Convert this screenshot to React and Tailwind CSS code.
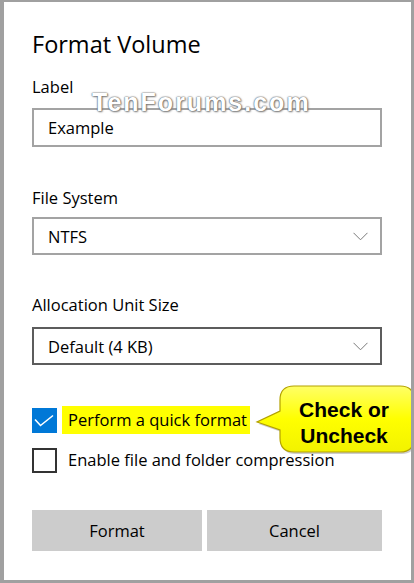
import React from "react";

const Chevron = () => (
  <svg width="15" height="9" viewBox="0 0 15 9" className="shrink-0">
    <path d="M0.5 0.8 L7.5 7.8 L14.5 0.8" fill="none" stroke="#7a7a7a" strokeWidth="1" />
  </svg>
);

const Select = ({ value, borderClass }) => (
  <div className={`mt-[9px] flex h-[38px] w-[350px] items-center justify-between border-2 ${borderClass} pl-[14px] pr-[12px]`}>
    <span className="pt-[2px] text-[16.5px] leading-[20px] text-black">{value}</span>
    <Chevron />
  </div>
);

export default function App() {
  return (
    <div
      className="relative h-[583px] w-[414px] overflow-hidden border-t-2 border-r-[3px] border-b-[3px] border-l-[4px] border-[#a0a0a0] bg-white pl-[28px]"
      style={{ fontFamily: '"Open Sans", "Noto Sans", sans-serif' }}
    >
      <div className="flex flex-col">
        <div className="pt-[27px] text-[23.5px] leading-[30px] text-black">Format Volume</div>

        <div className="mt-[18px] text-[16.5px] leading-[20px] text-black">Label</div>
        <div className="mt-[11px] flex h-[39px] w-[350px] items-center border-2 border-[#a3a3a3] pl-[14px]">
          <span className="text-[16.5px] leading-[20px] text-black">Example</span>
        </div>

        <div className="mt-[41px] text-[16.5px] leading-[20px] text-black">File System</div>
        <Select value="NTFS" borderClass="border-[#a3a3a3]" />

        <div className="mt-[40px] text-[16.5px] leading-[20px] text-black">Allocation Unit Size</div>
        <div className="mt-[3px]">
          <Select value="Default (4 KB)" borderClass="border-[#5c5c5c]" />
        </div>

        <div className="mt-[41px] flex h-[28px] items-center">
          <div className="flex h-[25px] w-[25px] items-center justify-center bg-[#0078d7]">
            <svg width="25" height="25" viewBox="0 0 25 25">
              <path d="M3 11.5 L8.5 17.5 L21 7.5" fill="none" stroke="#ffffff" strokeWidth="1.6" />
            </svg>
          </div>
          <div className="ml-[5px] flex h-[28px] items-center bg-[#ffff00] pl-[6px] pr-[3px]">
            <span className="text-[16.5px] leading-[20px] text-black">Perform a quick format</span>
          </div>
        </div>

        <div className="mt-[12px] flex h-[28px] items-center">
          <div className="h-[25px] w-[25px] border-2 border-[#333333] bg-white" />
          <span className="ml-[11px] text-[16.5px] leading-[20px] text-black">Enable file and folder compression</span>
        </div>

        <div className="mt-[36px] flex gap-[5px]">
          <button className="flex h-[41px] w-[170px] items-center justify-center bg-[#cccccc] text-[16.5px] leading-[20px] text-black">
            Format
          </button>
          <button className="flex h-[41px] w-[175px] items-center justify-center bg-[#cccccc] text-[16.5px] leading-[20px] text-black">
            Cancel
          </button>
        </div>
      </div>

      {/* Watermark */}
      <div
        className="pointer-events-none absolute left-[88px] top-[85px] text-[25px] font-bold leading-[30px] tracking-[2px] text-white [text-shadow:0_0_1px_#555,0_0_2px_#6e6e6e,1px_1px_2px_#8a8a8a]"
        style={{ fontFamily: '"Liberation Sans", Arial, sans-serif' }}
      >
        TenForums.com
      </div>

      {/* Callout */}
      <div className="pointer-events-none absolute left-[243px] top-[380px] h-[74px] w-[170px]">
        <svg width="170" height="74" viewBox="0 0 170 74" className="absolute left-0 top-0">
          <defs>
            <linearGradient id="yg" x1="0" y1="0" x2="0" y2="1">
              <stop offset="0" stopColor="#ffff66" />
              <stop offset="0.5" stopColor="#ffff00" />
              <stop offset="1" stopColor="#f2f200" />
            </linearGradient>
          </defs>
          <path
            d="M47 4 H153 Q167 4 167 18 V56 Q167 70 153 70 H47 Q33 70 33 56 V48 L10 40 L33 29 V18 Q33 4 47 4 Z"
            fill="#9a9a9a"
            opacity="0.5"
            transform="translate(1.5 2)"
          />
          <path
            d="M47 4 H153 Q167 4 167 18 V56 Q167 70 153 70 H47 Q33 70 33 56 V48 L10 40 L33 29 V18 Q33 4 47 4 Z"
            fill="url(#yg)"
            stroke="#b3a100"
            strokeWidth="1.2"
          />
        </svg>
        <div
          className="absolute left-[33px] top-[15px] w-[128px] text-center text-[21px] font-bold leading-[26px] text-black"
          style={{ fontFamily: '"Liberation Sans", Arial, sans-serif' }}
        >
          Check or
          <br />
          Uncheck
        </div>
      </div>
    </div>
  );
}
